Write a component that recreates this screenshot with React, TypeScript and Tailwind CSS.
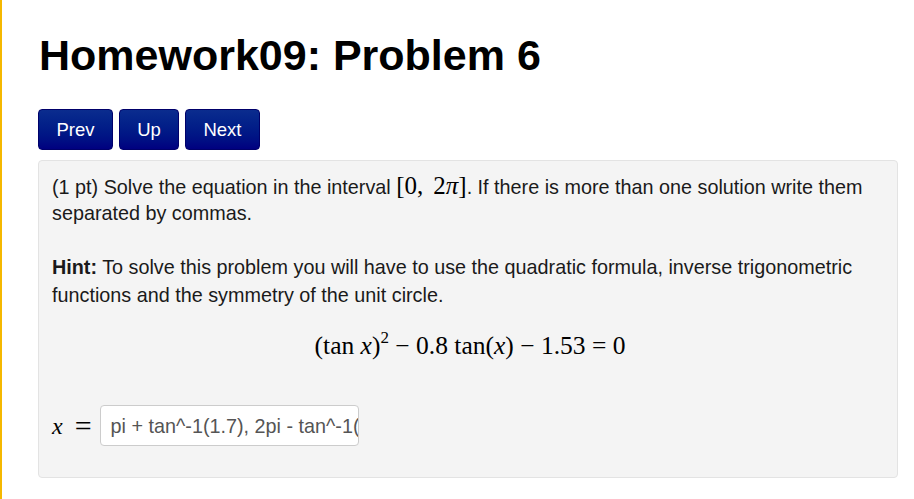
import React from "react";

const serif = "font-['Liberation_Serif','DejaVu_Serif',serif]";

function Btn({ label, w }: { label: string; w: string }) {
  return (
    <div
      className={`${w} h-[41px] flex items-center justify-center rounded-[4px] border border-[#00006a] bg-gradient-to-b from-[#0b2c8e] to-[#000080] text-white text-[18.5px]`}
    >
      {label}
    </div>
  );
}

export default function App() {
  return (
    <div className="w-[914px] h-[499px] bg-white border-l-2 border-[#f5b800] font-['Liberation_Sans',Arial,sans-serif] text-black overflow-hidden">
      <div className="pl-[36px] pr-[15px]">
        <h1 className="pt-[30px] text-[43px] font-bold leading-[50px] pl-[1px]">
          Homework09: Problem 6
        </h1>
        <div className="mt-[29px] flex gap-[6px]">
          <Btn label="Prev" w="w-[75px]" />
          <Btn label="Up" w="w-[60px]" />
          <Btn label="Next" w="w-[75px]" />
        </div>
        <div className="mt-[10px] w-[860px] h-[318px] bg-[#f4f4f4] border border-[#e3e3e3] rounded-[4px] px-[13px] pt-[13px] text-[19.8px] leading-[26px] text-[#1a1a1a]">
          <p>
            (1 pt) Solve the equation in the interval{" "}
            <span className={`${serif} text-[25px] text-black leading-[20px]`}>
              [0,<span className="inline-block w-[10px]" />2<i>π</i>]
            </span>
            . If there is more than one solution write them separated by commas.
          </p>
          <p className="mt-[27px] leading-[28px]">
            <b>Hint:</b> To solve this problem you will have to use the quadratic formula, inverse trigonometric functions and the symmetry of the unit circle.
          </p>
          <div className={`mt-[22px] flex justify-center ${serif} text-[25.5px] leading-[30px] text-black pl-[4px]`}>
            <span>
              (tan&nbsp;<i>x</i>)<sup className="text-[17px] relative -top-[11px]">2</sup>
              &nbsp;−&nbsp;0.8&nbsp;tan(<i>x</i>)&nbsp;−&nbsp;1.53&nbsp;=&nbsp;0
            </span>
          </div>
          <div className="mt-[44px] flex items-center">
            <span className={`${serif} text-[24px] text-black italic`}>x</span>
            <span className={`${serif} text-[30px] leading-[30px] text-black ml-[12px]`}>=</span>
            <div className="ml-[8px] w-[259px] h-[41px] bg-white border border-[#cccccc] rounded-[4px] flex items-center pl-[10px] text-[19.8px] text-[#555] overflow-hidden whitespace-nowrap">
              pi + tan^-1(1.7), 2pi - tan^-1(
            </div>
          </div>
        </div>
      </div>
    </div>
  );
}
